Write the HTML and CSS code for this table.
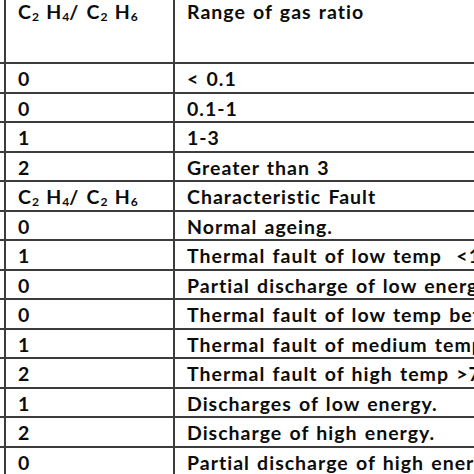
FILE: index.html
```html
<!DOCTYPE html>
<html>
<head>
<meta charset="utf-8">
<link rel="stylesheet" href="styles.css">
</head>
<body>
<table class="gas-table">
  <colgroup>
    <col class="c0"><col class="c1"><col class="c2">
  </colgroup>
  <tr class="head">
    <td></td>
    <td>C<sub>2</sub> H<sub>4</sub>/ C<sub>2</sub> H<sub>6</sub></td>
    <td>Range of gas ratio</td>
  </tr>
  <tr><td></td><td>0</td><td>&lt; 0.1</td></tr>
  <tr><td></td><td>0</td><td>0.1-1</td></tr>
  <tr><td></td><td>1</td><td>1-3</td></tr>
  <tr><td></td><td>2</td><td>Greater than 3</td></tr>
  <tr><td></td><td>C<sub>2</sub> H<sub>4</sub>/ C<sub>2</sub> H<sub>6</sub></td><td>Characteristic Fault</td></tr>
  <tr><td></td><td>0</td><td>Normal ageing.</td></tr>
  <tr><td></td><td>1</td><td>Thermal fault of low temp &nbsp;&lt;150°C</td></tr>
  <tr><td></td><td>0</td><td>Partial discharge of low energy density</td></tr>
  <tr><td></td><td>0</td><td>Thermal fault of low temp between 150-300°C</td></tr>
  <tr><td></td><td>1</td><td>Thermal fault of medium temp between 300-700°C</td></tr>
  <tr><td></td><td>2</td><td>Thermal fault of high temp &gt;700°C</td></tr>
  <tr><td></td><td>1</td><td>Discharges of low energy.</td></tr>
  <tr><td></td><td>2</td><td>Discharge of high energy.</td></tr>
  <tr><td></td><td>0</td><td>Partial discharge of high energy</td></tr>
</table>
</body>
</html>
```

FILE: styles.css
```css
html, body {
  margin: 0;
  padding: 0;
  background: #ffffff;
  overflow: hidden;
  width: 474px;
  height: 474px;
}

.gas-table {
  border-collapse: collapse;
  table-layout: fixed;
  width: 900px;
  font-family: Lato, "Open Sans", sans-serif;
  font-weight: 700;
  font-size: 19.5px;
  letter-spacing: 1px;
  word-spacing: 1.5px;
  color: #0c0c0c;
}

.c0 { width: 5px; }
.c1 { width: 169px; }
.c2 { width: 726px; }

.gas-table td {
  border-top: 2px solid #3c3c3c;
  border-bottom: 2px solid #3c3c3c;
  border-left: 2px solid #3c3c3c;
  height: 29.5px;
  box-sizing: border-box;
  padding: 3px 0 0 12px;
  line-height: 20px;
  vertical-align: middle;
  white-space: nowrap;
  overflow: hidden;
}

.gas-table td:first-child {
  border-left: none;
  padding: 0;
}

.gas-table tr.head td {
  border-top: none;
  height: 63px;
  vertical-align: top;
  padding-top: 0;
  line-height: 24px;
}

.gas-table tr.head td:first-child {
  padding: 0;
}

.gas-table sub {
  font-size: 0.62em;
  vertical-align: -0.15em;
  line-height: 0;
  letter-spacing: 0;
}
```
